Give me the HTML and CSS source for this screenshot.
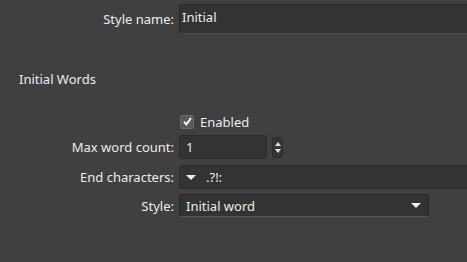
FILE: index.html
```html
<!DOCTYPE html>
<html>
	<head>
		<meta charset="utf-8">
		<link rel="stylesheet" href="styles.css">
		<title>Initial Words</title>
	</head>
	<body>
		<div class="panel">
			<div class="row row-name">
				<label class="lbl">Style name:</label>
				<div class="field field-name">Initial</div>
			</div>

			<div class="section">Initial Words</div>

			<div class="row row-check">
				<span class="lbl"></span>
				<div class="check">
					<span class="box">
						<svg width="11" height="11" viewBox="0 0 11 11"><path d="M2 5.8 L4.4 8.4 L9 2" fill="none" stroke="#f2f2f2" stroke-width="2"/></svg>
					</span>
					<span>Enabled</span>
				</div>
			</div>

			<div class="row row-count">
				<label class="lbl">Max word count:</label>
				<div class="field field-count">1</div>
				<div class="spin">
					<span class="up"></span>
					<span class="down"></span>
				</div>
			</div>

			<div class="row row-end">
				<label class="lbl">End characters:</label>
				<div class="field field-end"><span class="tri"></span><span class="chars">.?!:</span></div>
			</div>

			<div class="row row-style">
				<label class="lbl">Style:</label>
				<div class="field field-style"><span>Initial word</span><span class="tri"></span></div>
			</div>
		</div>
	</body>
</html>
```

FILE: styles.css
```css
*{
	margin: 0;
	padding: 0;
	box-sizing: border-box;
}
body{
	background: #404040;
	color: #ececec;
	font-family: "Noto Sans", "Open Sans", sans-serif;
	font-size: 13px;
	width: 467px;
	height: 262px;
	overflow: hidden;
}
.panel{
	padding-top: 4px;
}
.row{
	display: flex;
	align-items: center;
}
.lbl{
	width: 175px;
	flex: none;
	text-align: right;
	padding-right: 1px;
}
.field{
	background: #333333;
	border: 1px solid #2b2b2b;
	border-radius: 3px;
	margin-left: 4px;
	display: flex;
	align-items: center;
	padding: 0 6px;
}
.field-name{
	flex: 1;
	height: 30px;
	align-items: flex-start;
	padding: 3px 2px;
	margin-right: -4px;
	border-color: #2a2a2a;
	border-bottom-color: #4a4a4a;
}
.section{
	margin: 35px 0 0 19px;
	line-height: 20px;
}
.row-check{
	margin-top: 25px;
	height: 15px;
}
.check{
	display: flex;
	align-items: center;
	margin-left: 5px;
}
.box{
	width: 14px;
	height: 14px;
	background: #5a5a5a;
	border: 1px solid #6a6a6a;
	border-radius: 2px;
	display: flex;
	align-items: center;
	justify-content: center;
	margin-right: 6px;
}
.row-count{
	margin-top: 6px;
}
.field-count{
	width: 88px;
	height: 24px;
}
.spin{
	width: 11px;
	height: 21px;
	margin-left: 5px;
	border: 1px solid #2b2b2b;
	background: #353535;
	border-radius: 3px;
	display: flex;
	flex-direction: column;
	align-items: center;
	justify-content: center;
	gap: 3px;
}
.up{
	border-left: 3px solid transparent;
	border-right: 3px solid transparent;
	border-bottom: 4px solid #e0e0e0;
}
.down{
	border-left: 3px solid transparent;
	border-right: 3px solid transparent;
	border-top: 4px solid #e0e0e0;
}
.row-end{
	margin-top: 6px;
}
.field-end{
	flex: 1;
	height: 24px;
	margin-right: -4px;
}
.tri{
	width: 0;
	height: 0;
	border-left: 5px solid transparent;
	border-right: 5px solid transparent;
	border-top: 5px solid #f0f0f0;
}
.chars{
	margin-left: 10px;
}
.row-style{
	margin-top: 5px;
}
.field-style{
	width: 250px;
	height: 23px;
	justify-content: space-between;
	padding: 0 7px 0 6px;
	border-color: #262626;
	border-bottom-color: #555;
}
```
